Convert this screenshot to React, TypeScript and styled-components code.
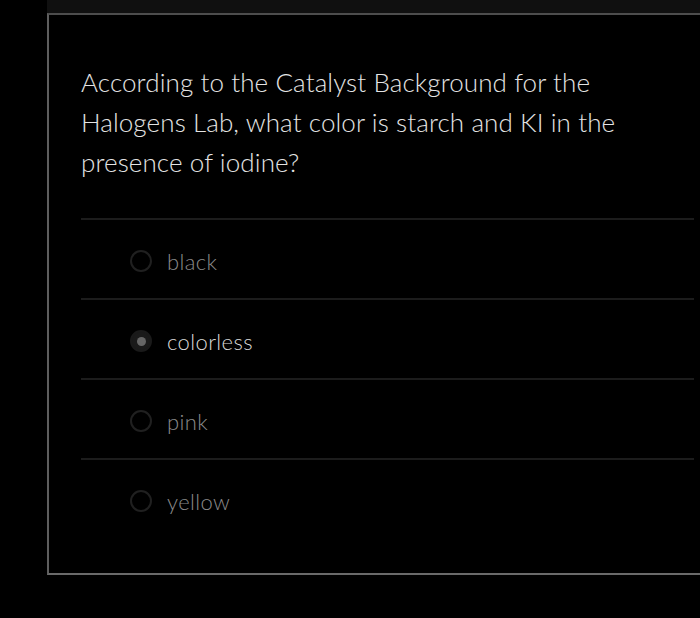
import React from 'react'
import styled, { createGlobalStyle } from 'styled-components'

const GlobalStyle = createGlobalStyle`
  html, body {
    margin: 0;
    padding: 0;
    background: #000;
    font-family: Lato, "Open Sans", sans-serif;
  }
`

const Page = styled.div`
  width: 700px;
  height: 618px;
  overflow: hidden;
  background: #000;
  padding-left: 47px;
  box-sizing: border-box;
`

const TopStrip = styled.div`
  height: 13px;
  background: #101010;
`

const Card = styled.div`
  border-top: 2px solid #4d4d4d;
  border-left: 2px solid #5e5e5e;
  border-bottom: 2px solid #6a6a6a;
  padding: 47px 6px 35px 32px;
`

const Question = styled.p`
  margin: 0;
  max-width: 560px;
  color: #e4e4e4;
  font-size: 26px;
  font-weight: 300;
  line-height: 40px;
  letter-spacing: 0.1px;
`

const Options = styled.ul`
  list-style: none;
  margin: 36px 0 0;
  padding: 0;
`

const Option = styled.li<{ $selected?: boolean }>`
  display: flex;
  align-items: center;
  gap: 15px;
  height: 74px;
  padding: 4px 0 0 49px;
  border-top: 2px solid #1c1c1c;
  color: ${({ $selected }) => ($selected ? '#d8d8d8' : '#8a8a8a')};
  font-size: 22px;
  font-weight: 300;
  letter-spacing: 0.4px;
`

const Radio = styled.span<{ $selected?: boolean }>`
  box-sizing: border-box;
  width: 22px;
  height: 22px;
  border-radius: 50%;
  display: flex;
  align-items: center;
  justify-content: center;
  border: 2px solid ${({ $selected }) => ($selected ? '#1a1a1a' : '#202020')};
  background: ${({ $selected }) => ($selected ? '#1a1a1a' : 'transparent')};

  &::after {
    content: '';
    width: 9px;
    height: 9px;
    border-radius: 50%;
    background: #666;
    display: ${({ $selected }) => ($selected ? 'block' : 'none')};
  }
`

const choices = ['black', 'colorless', 'pink', 'yellow']

export default function App() {
  return (
    <>
      <GlobalStyle />
      <Page>
        <TopStrip />
        <Card>
          <Question>
            According to the Catalyst Background for the Halogens Lab, what color is starch and KI in the
            presence of iodine?
          </Question>
          <Options>
            {choices.map((c) => (
              <Option key={c} $selected={c === 'colorless'}>
                <Radio $selected={c === 'colorless'} />
                {c}
              </Option>
            ))}
          </Options>
        </Card>
      </Page>
    </>
  )
}
